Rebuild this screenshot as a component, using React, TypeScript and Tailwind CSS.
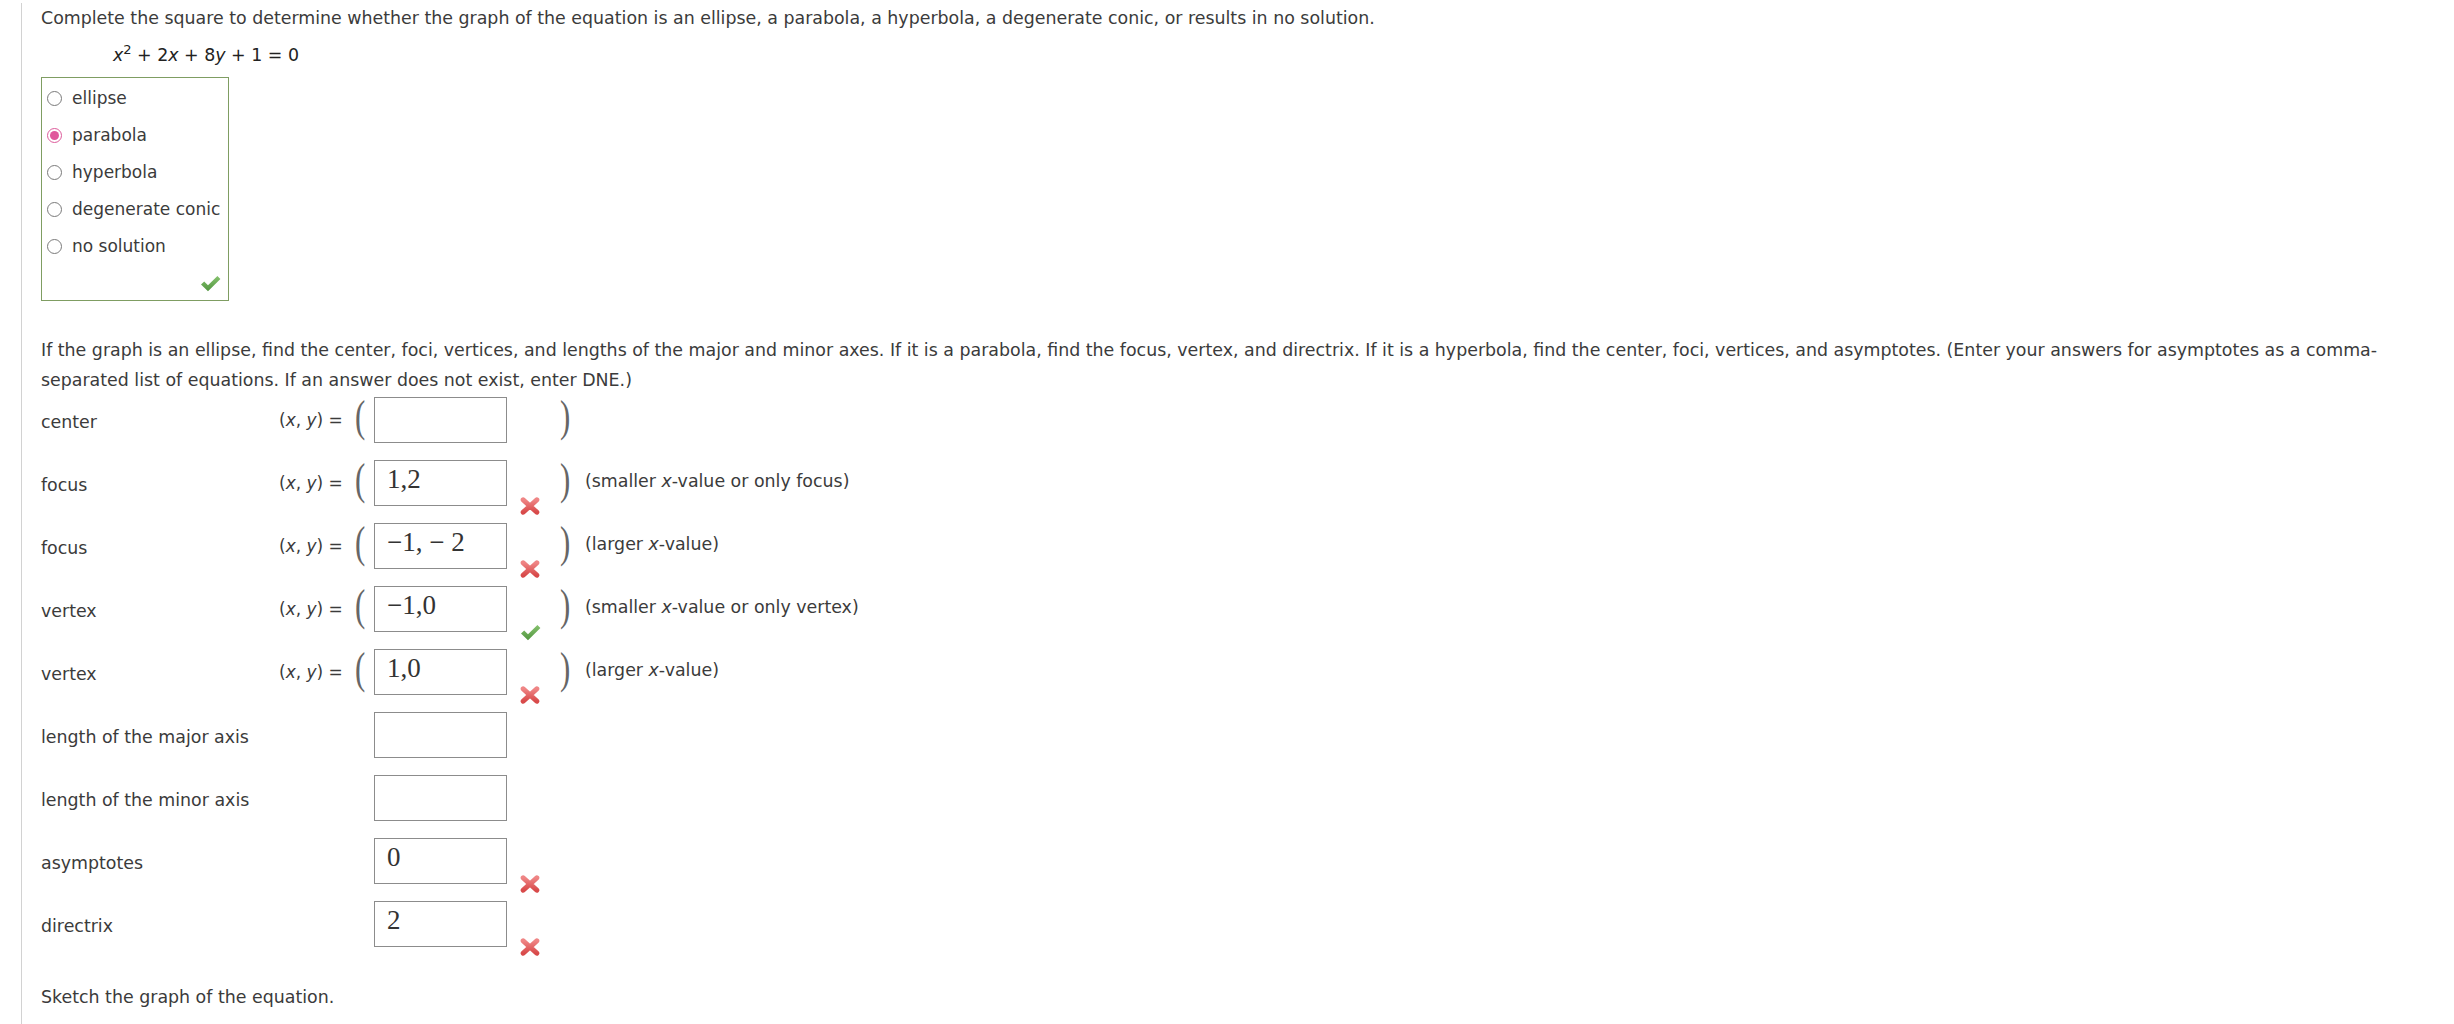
import React from "react";

const XMark = () => (
  <svg width="20" height="18" viewBox="0 0 20 18" className="block">
    <defs>
      <linearGradient id="xg" x1="0" y1="0" x2="0" y2="1">
        <stop offset="0" stopColor="#ef8585" />
        <stop offset="1" stopColor="#d84a4a" />
      </linearGradient>
    </defs>
    <path d="M3.2 2.8 L16.8 15.2 M16.8 2.8 L3.2 15.2" stroke="url(#xg)" strokeWidth="5" strokeLinecap="round" />
  </svg>
);

const CheckMark = () => (
  <svg width="21" height="17" viewBox="0 0 21 17" className="block">
    <defs>
      <linearGradient id="cg" x1="0" y1="0" x2="0" y2="1">
        <stop offset="0" stopColor="#86c26e" />
        <stop offset="1" stopColor="#529640" />
      </linearGradient>
    </defs>
    <path d="M1 9.5 L4.2 6.4 L8 10.2 L17.4 1 L20.4 4 L8 16.2 Z" fill="url(#cg)" />
  </svg>
);

function Radio({ checked, label }: { checked?: boolean; label: string }) {
  return (
    <div className="flex h-[37px] items-center">
      {checked ? (
        <span className="ml-[5px] flex h-[15px] w-[15px] items-center justify-center rounded-full border border-[#dd5b9b] bg-white">
          <span className="h-[9px] w-[9px] rounded-full bg-[#e0589c]" />
        </span>
      ) : (
        <span className="ml-[5px] h-[15px] w-[15px] rounded-full border border-[#7a7a7a] bg-white" />
      )}
      <span className="ml-[10px] whitespace-nowrap text-[17px]">{label}</span>
    </div>
  );
}

function Paren({ children, w }: { children: string; w: string }) {
  return (
    <div className={`${w} flex h-[46px] items-center`}>
      <span className="inline-block origin-left -translate-y-[3px] scale-x-[0.7] font-['Liberation_Serif',serif] text-[44px] leading-none text-[#666]">
        {children}
      </span>
    </div>
  );
}

type RowProps = {
  label: string;
  coord?: boolean;
  value?: string;
  mark?: "x" | "check";
  note?: React.ReactNode;
};

function Row({ label, coord, value, mark, note }: RowProps) {
  return (
    <div className="flex h-[46px] items-center">
      <div className="w-[238px] translate-y-[2px]">{label}</div>
      {coord ? (
        <>
          <div className="w-[76px] translate-y-[1px] whitespace-nowrap text-[17px]">
            (<i>x</i>, <i>y</i>) =
          </div>
          <Paren w="w-[19px]">(</Paren>
        </>
      ) : (
        <div className="w-[95px]" />
      )}
      <div className="h-[46px] w-[133px] border border-[#8c8c8c] bg-white pl-[12px] pt-[5px] font-['Liberation_Serif',serif] text-[27px] leading-none whitespace-nowrap text-[#333]">
        {value}
      </div>
      <div className="flex h-[46px] w-[53px] items-end">
        {mark && (
          <div className="ml-[13px] translate-y-[9px]">
            {mark === "x" ? <XMark /> : <CheckMark />}
          </div>
        )}
      </div>
      {coord && (
        <>
          <Paren w="w-[25px]">)</Paren>
          {note && <div className="translate-y-[-2px] whitespace-nowrap">{note}</div>}
        </>
      )}
    </div>
  );
}

export default function App() {
  return (
    <div className="min-h-[1024px] bg-white font-['DejaVu_Sans',Verdana,sans-serif] text-[17.4px] text-[#3b3b3b]">
      <div className="ml-[21px] min-h-[1024px] border-l border-[#d2d2d2] pl-[19px]">
        <div className="mt-[3px] h-[30px] whitespace-nowrap leading-[30px]">
          Complete the square to determine whether the graph of the equation is an ellipse, a parabola, a hyperbola, a
          degenerate conic, or results in no solution.
        </div>
        <div className="ml-[72px] mt-[7px] h-[30px] leading-[30px] text-[#222]">
          <i>x</i>
          <sup>2</sup> + 2<i>x</i> + 8<i>y</i> + 1 = 0
        </div>

        <div className="mt-[7px] flex h-[224px] w-[188px] flex-col border border-[#7f9d62] pt-[2px]">
          <Radio label="ellipse" />
          <Radio label="parabola" checked />
          <Radio label="hyperbola" />
          <Radio label="degenerate conic" />
          <Radio label="no solution" />
          <div className="mt-[10px] flex justify-end pr-[7px]">
            <CheckMark />
          </div>
        </div>

        <div className="mt-[34px] leading-[30px]">
          <span className="whitespace-nowrap">
            If the graph is an ellipse, find the center, foci, vertices, and lengths of the major and minor axes. If it is a
            parabola, find the focus, vertex, and directrix. If it is a hyperbola, find the center, foci, vertices, and
            asymptotes. (Enter your answers for asymptotes as a comma-
          </span>
          <br />
          separated list of equations. If an answer does not exist, enter DNE.)
        </div>

        <div className="mt-[2px] flex flex-col gap-[17px]">
          <Row label="center" coord />
          <Row
            label="focus"
            coord
            value="1,2"
            mark="x"
            note={
              <>
                (smaller <i>x</i>-value or only focus)
              </>
            }
          />
          <Row
            label="focus"
            coord
            value="−1, − 2"
            mark="x"
            note={
              <>
                (larger <i>x</i>-value)
              </>
            }
          />
          <Row
            label="vertex"
            coord
            value="−1,0"
            mark="check"
            note={
              <>
                (smaller <i>x</i>-value or only vertex)
              </>
            }
          />
          <Row
            label="vertex"
            coord
            value="1,0"
            mark="x"
            note={
              <>
                (larger <i>x</i>-value)
              </>
            }
          />
          <Row label="length of the major axis" />
          <Row label="length of the minor axis" />
          <Row label="asymptotes" value="0" mark="x" />
          <Row label="directrix" value="2" mark="x" />
        </div>

        <div className="mt-[35px] leading-[30px]">Sketch the graph of the equation.</div>
      </div>
    </div>
  );
}
